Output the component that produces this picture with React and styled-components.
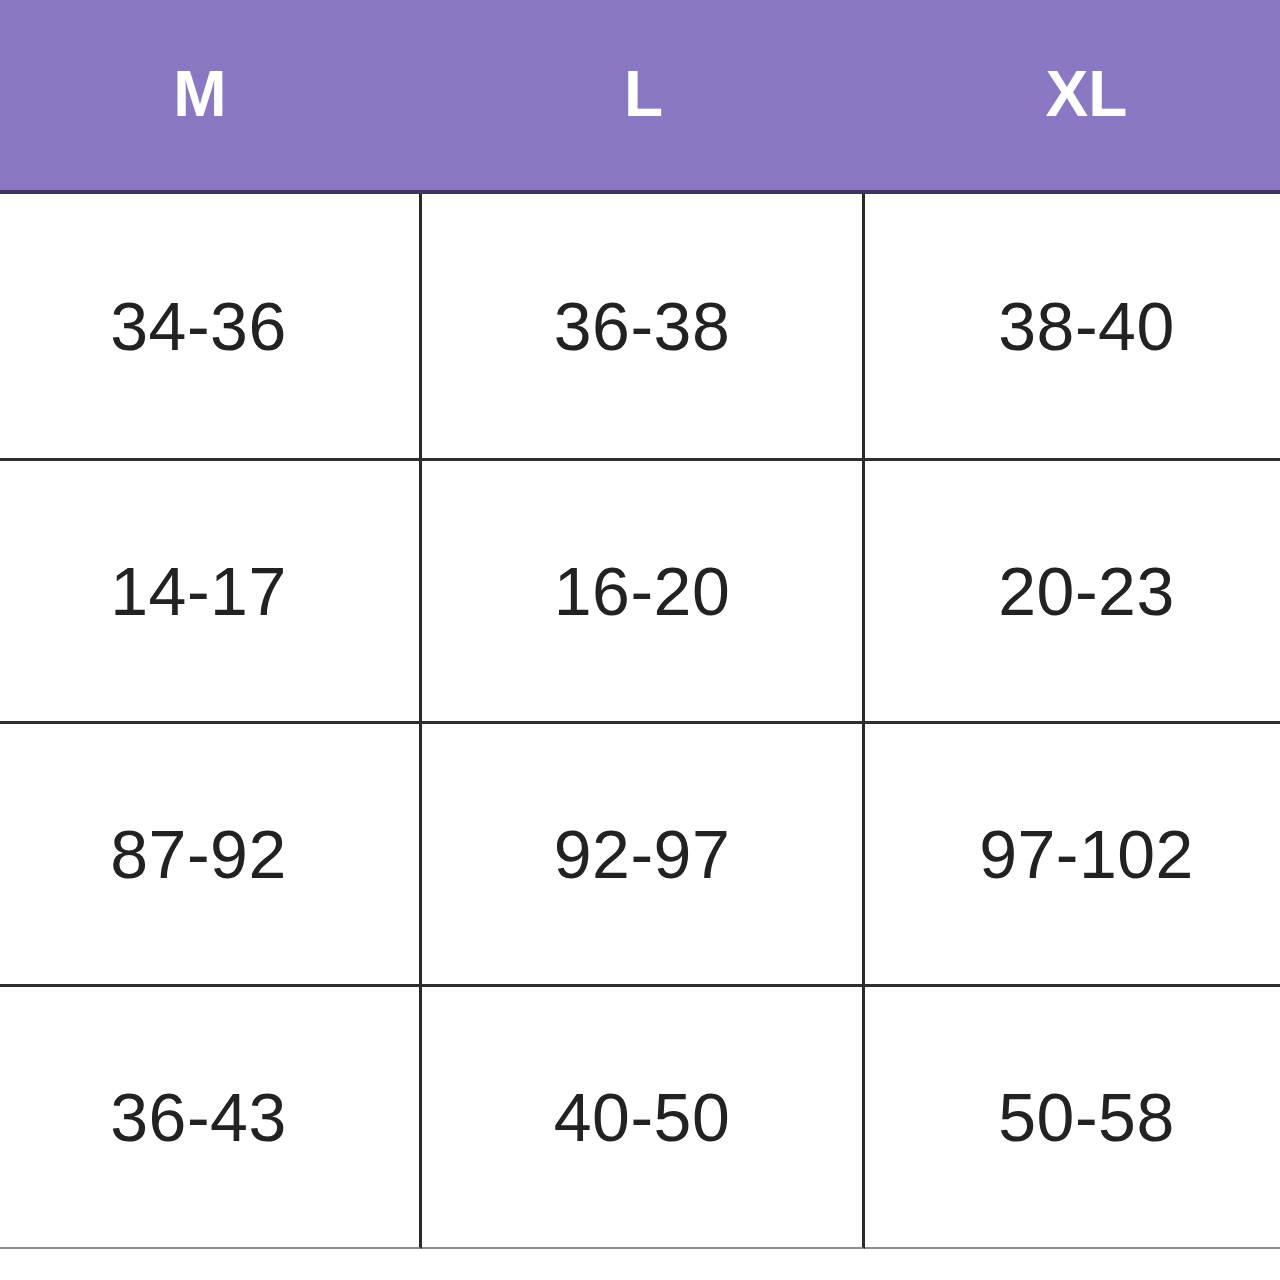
import React from "react";
import styled, { createGlobalStyle } from "styled-components";

const Global = createGlobalStyle`
  html, body { margin: 0; padding: 0; background: #ffffff; }
  body { font-family: "Liberation Sans", Arial, sans-serif; }
`;

const Frame = styled.div`
  width: 1280px;
  height: 1280px;
  overflow: hidden;
  background: #fff;
`;

const Table = styled.div`
  display: grid;
  grid-template-columns: 444px 443px 443px;
  margin-left: -22px;
  width: 1330px;
`;

const HeadCell = styled.div`
  height: 190px;
  background: #8b78c5;
  border-bottom: 4px solid #3e3666;
  display: flex;
  align-items: center;
  justify-content: center;
  color: #ffffff;
  font-weight: 700;
  font-size: 64px;
  padding-bottom: 2px;
  box-sizing: border-box;
  height: 194px;
`;

const Cell = styled.div`
  height: ${(p) => p.$h}px;
  box-sizing: content-box;
  border-right: ${(p) => (p.$last ? "none" : "3px solid #2a2a2a")};
  border-bottom: ${(p) => (p.$bottom ? "2px solid #8c8c8c" : "3px solid #2f2f2f")};
  display: flex;
  align-items: center;
  justify-content: center;
  color: #222222;
  font-size: 68px;
  letter-spacing: 0.5px;
  padding-right: ${(p) => (p.$last ? "0" : "0")};
`;

const heads = ["M", "L", "XL"];
const rows = [
  ["34-36", "36-38", "38-40"],
  ["14-17", "16-20", "20-23"],
  ["87-92", "92-97", "97-102"],
  ["36-43", "40-50", "50-58"],
];
const heights = [264, 260, 260, 260];

export default function App() {
  return (
    <>
      <Global />
      <Frame>
        <Table>
          {heads.map((h) => (
            <HeadCell key={h}>{h}</HeadCell>
          ))}
          {rows.map((r, i) =>
            r.map((v, j) => (
              <Cell
                key={i + "-" + j}
                $h={heights[i]}
                $last={j === 2}
                $bottom={i === rows.length - 1}
              >
                {v}
              </Cell>
            ))
          )}
        </Table>
      </Frame>
    </>
  );
}
